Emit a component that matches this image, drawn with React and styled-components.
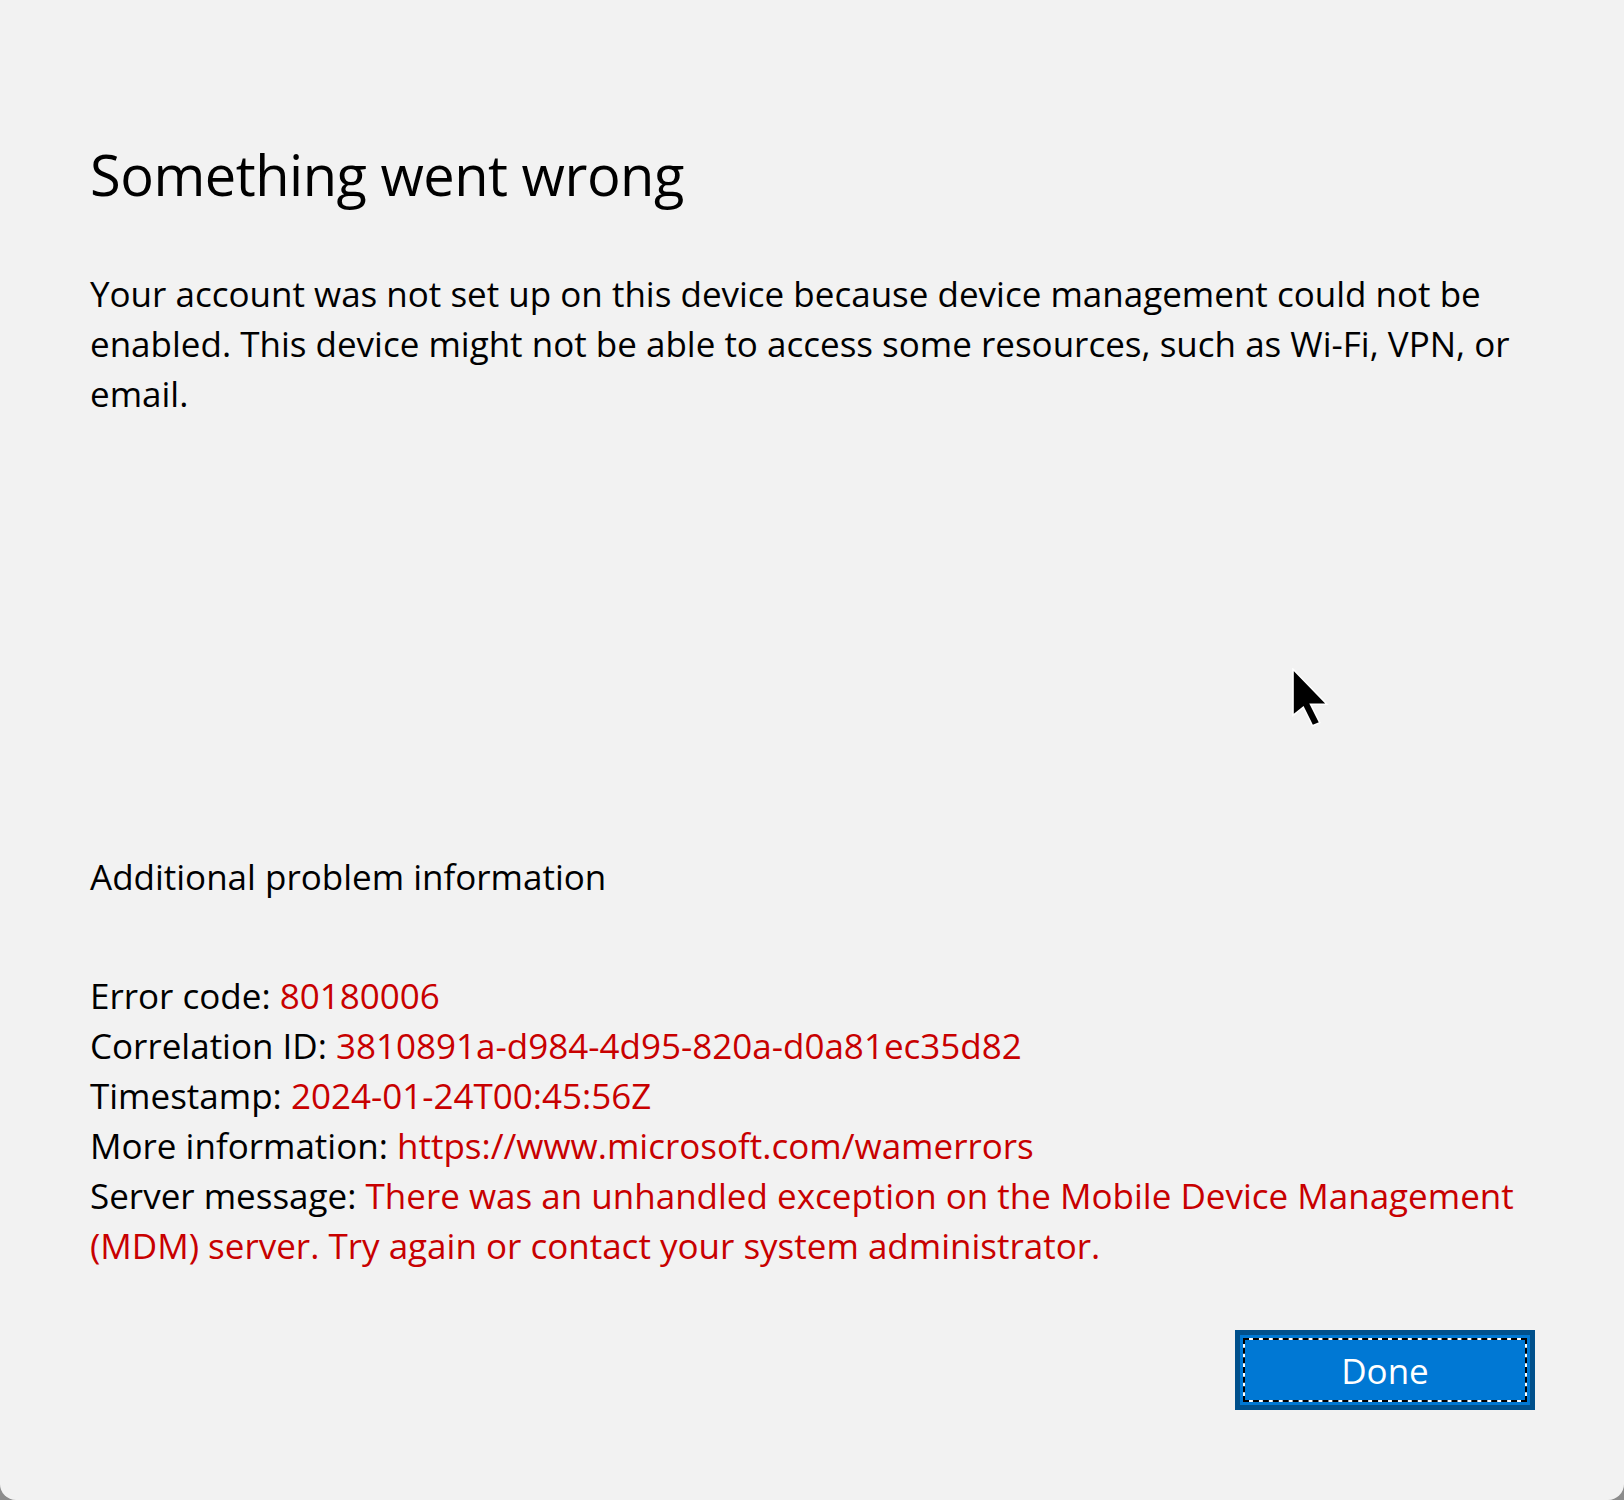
import React from 'react';
import styled, { createGlobalStyle } from 'styled-components';

const GlobalStyle = createGlobalStyle`
  html, body {
    margin: 0;
    padding: 0;
    background: #8c8c8c;
  }
`;

const Window = styled.div`
  position: relative;
  box-sizing: border-box;
  width: 1624px;
  height: 1500px;
  padding: 140px 54px 0 90px;
  background: #f2f2f2;
  border-radius: 0 0 16px 16px;
  display: flex;
  flex-direction: column;
  font-family: 'Open Sans', 'Noto Sans', sans-serif;
  color: #000;
  overflow: hidden;
`;

const Title = styled.h1`
  margin: 0;
  font-size: 56px;
  font-weight: 400;
  line-height: 68px;
  letter-spacing: -0.5px;
`;

const Text = styled.p`
  margin: ${(props) => props.$top || 0}px 0 0;
  font-size: 35px;
  line-height: 50px;
`;

const Details = styled.div`
  margin-top: 69px;
  display: flex;
  flex-direction: column;
`;

const Line = styled.div`
  font-size: 35px;
  line-height: 50px;
`;

const Value = styled.span`
  color: #c80000;
`;

const Footer = styled.div`
  margin-top: 59px;
  padding-right: 35px;
  display: flex;
  justify-content: flex-end;
`;

const Button = styled.button`
  box-sizing: border-box;
  width: 300px;
  height: 80px;
  padding: 3px;
  border: 5px solid #00508c;
  background: #0078d4;
  cursor: default;
  display: flex;
`;

const FocusRect = styled.span`
  flex: 1;
  display: flex;
  align-items: center;
  justify-content: center;
  border: 2px dashed #000;
  background: linear-gradient(#0078d4, #0078d4) padding-box, #fff border-box;
  font-family: 'Open Sans', 'Noto Sans', sans-serif;
  font-size: 35px;
  color: #fff;
`;

const Cursor = styled.svg`
  position: absolute;
  left: 1292px;
  top: 668px;
  width: 37px;
  height: 60px;
`;

const details = [
  ['Error code:', '80180006'],
  ['Correlation ID:', '3810891a-d984-4d95-820a-d0a81ec35d82'],
  ['Timestamp:', '2024-01-24T00:45:56Z'],
  ['More information:', 'https://www.microsoft.com/wamerrors'],
  [
    'Server message:',
    'There was an unhandled exception on the Mobile Device Management (MDM) server. Try again or contact your system administrator.',
  ],
];

export default function App() {
  return (
    <>
      <GlobalStyle />
      <Window>
        <Title>Something went wrong</Title>
        <Text $top={61}>
          Your account was not set up on this device because device management could not be
          enabled. This device might not be able to access some resources, such as Wi-Fi, VPN, or
          email.
        </Text>
        <Text $top={433}>Additional problem information</Text>
        <Details>
          {details.map(([label, value]) => (
            <Line key={label}>
              {label} <Value>{value}</Value>
            </Line>
          ))}
        </Details>
        <Footer>
          <Button>
            <FocusRect>Done</FocusRect>
          </Button>
        </Footer>
        <Cursor viewBox="0 0 36 58">
          <path
            d="M1 1 L1 46 L11 38 L20 56 L27 53 L18 35 L34 35 Z"
            fill="#000"
            stroke="#fff"
            strokeWidth="1.5"
            strokeLinejoin="miter"
          />
        </Cursor>
      </Window>
    </>
  );
}
